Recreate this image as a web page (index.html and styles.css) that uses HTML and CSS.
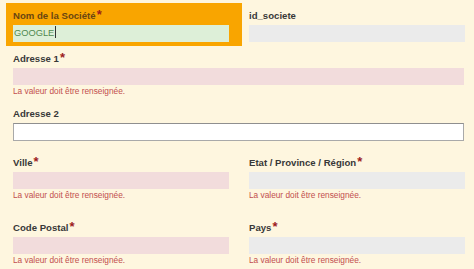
FILE: index.html
```html
<!DOCTYPE html>
<html lang="fr">
  <head>
    <meta charset="UTF-8" />
    <title>Société</title>
    <link rel="stylesheet" href="styles.css">
  </head>
  <body>
    <form class="form">
      <div class="row">
        <div class="field focus">
          <label>Nom de la Société<span class="req">*</span></label>
          <div class="input ok">GOOGLE<span class="caret"></span></div>
        </div>
        <div class="field">
          <label>id_societe</label>
          <input type="text" class="input off" disabled />
        </div>
      </div>

      <div class="row">
        <div class="field wide">
          <label>Adresse 1<span class="req">*</span></label>
          <input type="text" class="input bad" />
          <p class="error">La valeur doit être renseignée.</p>
        </div>
      </div>

      <div class="row">
        <div class="field wide">
          <label>Adresse 2</label>
          <input type="text" class="input plain" />
        </div>
      </div>

      <div class="row row-ville">
        <div class="field">
          <label>Ville<span class="req">*</span></label>
          <input type="text" class="input bad" />
          <p class="error">La valeur doit être renseignée.</p>
        </div>
        <div class="field">
          <label>Etat / Province / Région<span class="req">*</span></label>
          <input type="text" class="input off" disabled />
          <p class="error">La valeur doit être renseignée.</p>
        </div>
      </div>

      <div class="row row-cp">
        <div class="field">
          <label>Code Postal<span class="req">*</span></label>
          <input type="text" class="input bad" />
          <p class="error">La valeur doit être renseignée.</p>
        </div>
        <div class="field">
          <label>Pays<span class="req">*</span></label>
          <input type="text" class="input off" disabled />
          <p class="error">La valeur doit être renseignée.</p>
        </div>
      </div>
    </form>
  </body>
</html>
```

FILE: styles.css
```css
body {
  margin: 0;
  background: #fef6df;
  font-family: "Liberation Sans", Arial, sans-serif;
  overflow: hidden;
}
.form {
  padding: 3px 0 0 6px;
  margin: 0;
}
.row {
  display: grid;
  grid-template-columns: 236px 236px;
}
.row-ville {
  margin-top: 5px;
}
.row-cp {
  margin-top: 10px;
}
.field {
  padding: 7px 7px 4px 7px;
}
.field.wide {
  grid-column: 1 / 3;
}
.field.focus {
  background: #f9a500;
}
label {
  display: block;
  font-size: 9.6px;
  font-weight: bold;
  line-height: 12px;
  color: #383838;
  margin-bottom: 3px;
}
.focus label {
  color: #6a4612;
}
.req {
  color: #9c1b1b;
  font-size: 13px;
  line-height: 0;
  margin-left: 1px;
}
.input {
  display: block;
  box-sizing: border-box;
  width: 216px;
  height: 17px;
  margin: 0;
  padding: 0 1px;
  border: none;
  font-family: "Liberation Sans", Arial, sans-serif;
  font-size: 9.3px;
  line-height: 17px;
}
.wide .input {
  width: 451px;
}
.input.ok {
  background: #ddefd8;
  color: #4f8a4f;
}
.caret {
  display: inline-block;
  width: 1px;
  height: 12px;
  background: #333;
  vertical-align: -2px;
  margin-left: 1px;
}
.input.off {
  background: #ebebeb;
}
.input.bad {
  background: #f2dcdc;
}
.input.plain {
  height: 18px;
  background: #fff;
  border: 1px solid #a9a9a9;
  border-top-color: #8f8f8f;
}
.error {
  margin: 0;
  padding-top: 1px;
  font-size: 8.3px;
  line-height: 11px;
  color: #c24e4e;
}
```
